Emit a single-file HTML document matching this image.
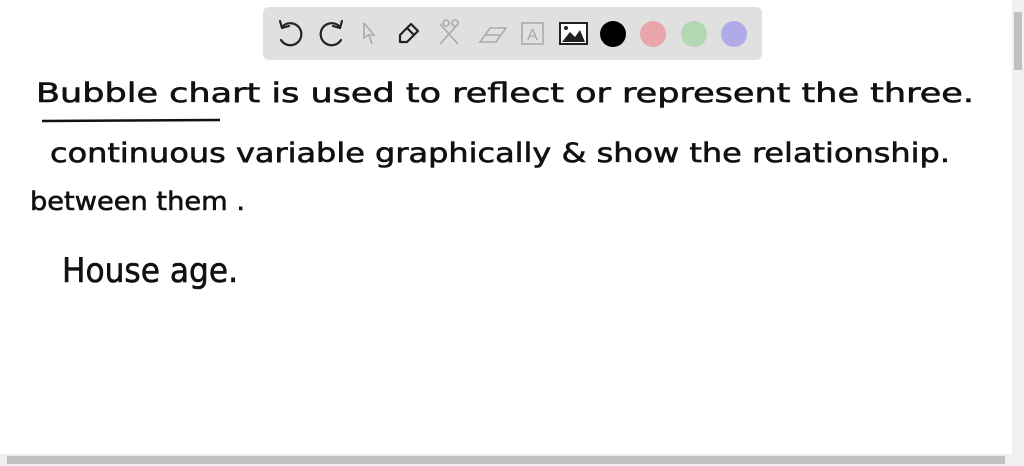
<!DOCTYPE html>
<html><head><meta charset="utf-8"><style>
html,body{margin:0;padding:0;background:#fff;width:1024px;height:466px;overflow:hidden;position:relative;font-family:"Liberation Sans",sans-serif}
.tb{position:absolute;left:263px;top:7px;width:499px;height:53px;background:#e0e0e0;border-radius:6px}
.vs{position:absolute;left:1012px;top:0;width:12px;height:454px;background:#f0f0f0}
.vt{position:absolute;left:1014px;top:12px;width:8px;height:58px;background:#c1c1c1}
.hs{position:absolute;left:0;top:454px;width:1024px;height:12px;background:#f0f0f0}
.ht{position:absolute;left:7px;top:456px;width:998px;height:8px;background:#c1c1c1}
</style></head><body>
<div class="tb"></div>
<svg style="position:absolute;left:0;top:0" width="1024" height="466">
 <g fill="none" stroke="#222" stroke-width="2.2" stroke-linecap="round" stroke-linejoin="round">
  <path d="M283 26 A11 11 0 1 1 281 40"/><path d="M280 21 L282 28 L289 26"/>
  <path d="M339 26 A11 11 0 1 0 341 40"/><path d="M342 21 L340 28 L333 26"/>
  <path d="M400 42 L400 35 L411 24 L418 31 L407 42 Z M407 28 L414 35"/>
 </g>
 <g fill="none" stroke="#aaa" stroke-width="1.6">
  <path d="M364 23 L374 35 L369 35 L372 44 M364 23 L364 38 L368 35"/>
  <path d="M440 24 L458 44 M458 24 L440 44 M446 26 a3 3 0 1 1 0.1 0 M455 26 a3 3 0 1 1 0.1 0"/>
  <path d="M480 42 L490 28 L506 28 L496 42 Z M485 35 L501 35"/>
  <rect x="522" y="23" width="21" height="21"/>
 </g>
 <text x="532.5" y="40" font-size="16" fill="#aaa" text-anchor="middle" font-family="Liberation Sans">A</text>
 <rect x="560" y="23" width="27" height="21" fill="#fff" stroke="#222" stroke-width="2"/>
 <path d="M562 42 L570 32 L575 37 L580 30 L585 42 Z" fill="#222"/><circle cx="566" cy="28" r="2" fill="#222"/>
 <circle cx="613" cy="34" r="13" fill="#000"/>
 <circle cx="653" cy="34" r="13" fill="#e8a5aa"/>
 <circle cx="694" cy="34" r="13" fill="#b3d6b3"/>
 <circle cx="734" cy="34" r="13" fill="#b0abe8"/>
 <g font-family="DejaVu Sans" fill="#111" stroke="#111" stroke-width="0.6">
  <text x="36" y="102" font-size="27" textLength="938" lengthAdjust="spacingAndGlyphs">Bubble chart is used to reflect or represent the three.</text>
  <text x="50" y="162" font-size="27" textLength="900" lengthAdjust="spacingAndGlyphs">continuous variable graphically &amp; show the relationship.</text>
  <text x="30" y="210" font-size="26" textLength="215" lengthAdjust="spacingAndGlyphs">between them .</text>
  <text x="62" y="282" font-size="34" textLength="176" lengthAdjust="spacingAndGlyphs">House age.</text>
 </g>
 <path d="M42 121 L220 120" stroke="#111" stroke-width="2.5"/>
</svg>
<div class="vs"></div><div class="vt"></div>
<div class="hs"></div><div class="ht"></div>
</body></html>
